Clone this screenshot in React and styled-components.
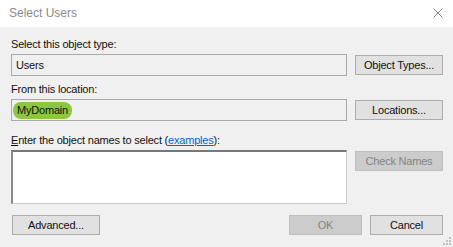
import React from 'react';
import styled, { createGlobalStyle } from 'styled-components';

const GlobalStyle = createGlobalStyle`
  html, body {
    margin: 0;
    padding: 0;
    background: #f0f0f0;
  }
  * {
    box-sizing: border-box;
  }
`;

const StyledWindow = styled.div`
  position: relative;
  width: 453px;
  height: 247px;
  display: flex;
  flex-direction: column;
  background-color: #f0f0f0;
  font-family: "Liberation Sans", Arial, sans-serif;
  font-size: 11px;
  letter-spacing: -0.2px;
  color: #111;
  overflow: hidden;
`;

const StyledTitleBar = styled.header`
  height: 27px;
  flex-shrink: 0;
  display: flex;
  align-items: center;
  justify-content: space-between;
  padding: 0 8px 2px 9px;
  background-color: #fff;
`;

const StyledTitle = styled.h1`
  margin: 0;
  font-size: 12px;
  font-weight: 400;
  letter-spacing: 0;
  color: #8a8a8a;
`;

const StyledClose = styled.span`
  display: flex;
  width: 10px;
  height: 10px;
  margin-right: 2px;
`;

const StyledBody = styled.main`
  flex: 1;
  display: flex;
  flex-direction: column;
  padding: 10px 10px 0 11px;
`;

const StyledLabel = styled.label`
  display: block;
  line-height: 15px;
  margin-top: ${(p) => p.$top || 0}px;
`;

const StyledRow = styled.div`
  display: flex;
  align-items: ${(p) => (p.$start ? 'flex-start' : 'center')};
  gap: 8px;
  margin-top: 2px;
`;

const StyledInput = styled.div`
  flex: 1;
  height: 22px;
  display: flex;
  align-items: center;
  padding: 0 4px;
  background-color: #f0f0f0;
  border: 1px solid #a9a9a9;
`;

const StyledTextArea = styled.div`
  flex: 1;
  height: 54px;
  background-color: #fff;
  border: 1px solid #c9c9c9;
  border-top: 2px solid #777;
  border-left: 2px solid #8a8a8a;
`;

const StyledButton = styled.button`
  width: ${(p) => p.$width || 88}px;
  height: 20px;
  flex-shrink: 0;
  padding: 0;
  font-family: inherit;
  font-size: 11px;
  letter-spacing: -0.2px;
  background-color: ${(p) => (p.disabled ? '#cccccc' : '#e1e1e1')};
  border: 1px solid ${(p) => (p.disabled ? '#bfbfbf' : '#adadad')};
  color: ${(p) => (p.disabled ? '#838383' : '#111')};
  margin-top: ${(p) => p.$top || 0}px;
`;

const StyledHighlight = styled.span`
  margin-left: -3px;
  padding: 2px 4px 2px 4px;
  border-radius: 8px;
  background-color: #8dc63f;
  line-height: 13px;
`;

const StyledLink = styled.span`
  color: #0066cc;
  text-decoration: underline;
`;

const StyledKey = styled.span`
  text-decoration: underline;
`;

const StyledFooter = styled.footer`
  display: flex;
  align-items: center;
  gap: 8px;
  margin-top: 11px;
  padding-left: 1px;
`;

const StyledSpacer = styled.div`
  flex: 1;
`;

const StyledGrip = styled.svg`
  position: absolute;
  right: 2px;
  bottom: 2px;
`;

const CloseIcon = () => (
  <svg width="10" height="10" viewBox="0 0 10 10">
    <path d="M0.5 0.5L9.5 9.5M9.5 0.5L0.5 9.5" stroke="#8c8c8c" strokeWidth="1" fill="none" />
  </svg>
);

const Grip = () => (
  <StyledGrip width="8" height="8" viewBox="0 0 8 8">
    <rect x="6" y="0" width="2" height="2" fill="#c2c2c2" />
    <rect x="3" y="3" width="2" height="2" fill="#c2c2c2" />
    <rect x="6" y="3" width="2" height="2" fill="#c2c2c2" />
    <rect x="0" y="6" width="2" height="2" fill="#c2c2c2" />
    <rect x="3" y="6" width="2" height="2" fill="#c2c2c2" />
    <rect x="6" y="6" width="2" height="2" fill="#c2c2c2" />
  </StyledGrip>
);

const App = () => {
  return (
    <>
      <GlobalStyle />
      <StyledWindow>
        <StyledTitleBar>
          <StyledTitle>Select Users</StyledTitle>
          <StyledClose>
            <CloseIcon />
          </StyledClose>
        </StyledTitleBar>
        <StyledBody>
          <StyledLabel>Select this object type:</StyledLabel>
          <StyledRow>
            <StyledInput>Users</StyledInput>
            <StyledButton>Object Types...</StyledButton>
          </StyledRow>
          <StyledLabel $top={6}>From this location:</StyledLabel>
          <StyledRow>
            <StyledInput>
              <StyledHighlight>MyDomain</StyledHighlight>
            </StyledInput>
            <StyledButton>Locations...</StyledButton>
          </StyledRow>
          <StyledLabel $top={12}>
            <StyledKey>E</StyledKey>nter the object names to select (<StyledLink>examples</StyledLink>):
          </StyledLabel>
          <StyledRow $start>
            <StyledTextArea />
            <StyledButton disabled $top={1}>Check Names</StyledButton>
          </StyledRow>
          <StyledFooter>
            <StyledButton>Advanced...</StyledButton>
            <StyledSpacer />
            <StyledButton disabled $width={73}>OK</StyledButton>
            <StyledButton $width={73}>Cancel</StyledButton>
          </StyledFooter>
        </StyledBody>
        <Grip />
      </StyledWindow>
    </>
  );
};

export default App;
